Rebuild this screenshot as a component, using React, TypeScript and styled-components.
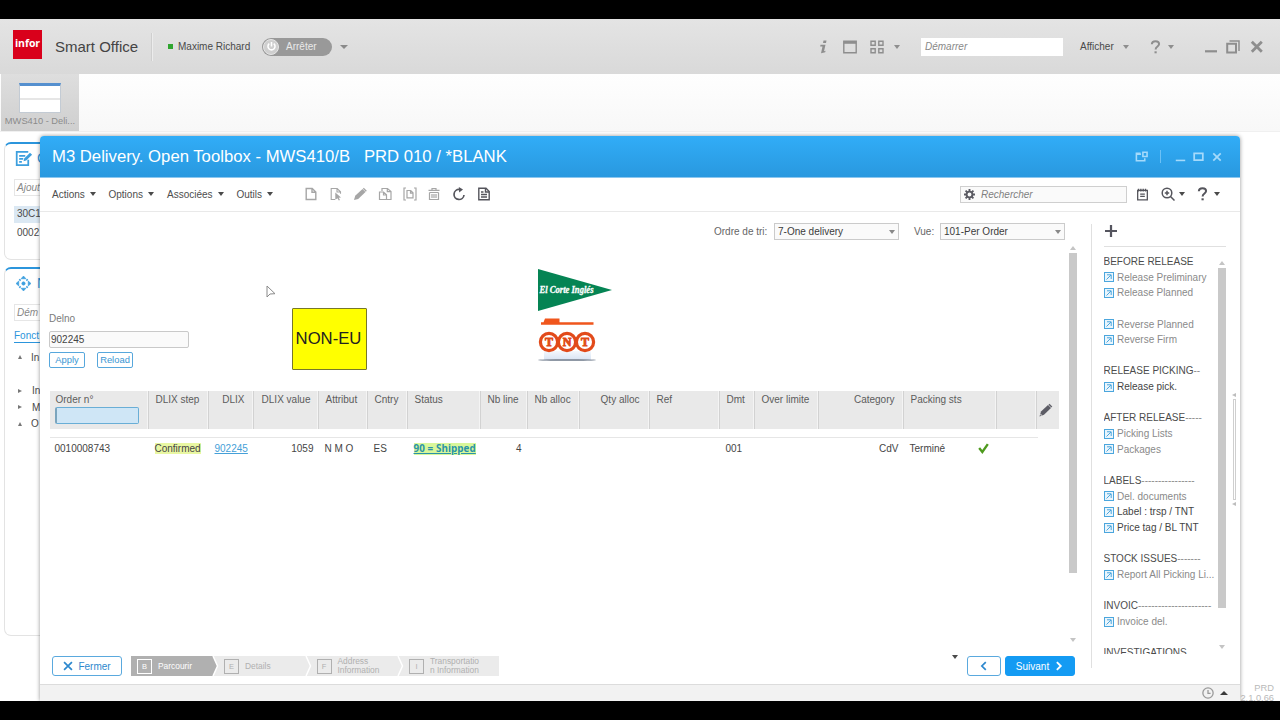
import React from "react";
import styled, { createGlobalStyle } from "styled-components";

const GlobalStyle = createGlobalStyle`
  *, *::before, *::after { box-sizing: border-box; }
  html, body { margin: 0; padding: 0; background: #000; overflow: hidden; }
  body { font-family: "Liberation Sans", Arial, sans-serif; font-size: 10px; color: #4a4a4a; }
  svg { display: block; flex: none; }
`;

/* ---------- frame ---------- */

const Screen = styled.div`
  width: 1280px;
  height: 720px;
  padding: 19px 0;
  background: #000;
`;

const Stage = styled.div`
  position: relative;
  display: flex;
  flex-direction: column;
  height: 682px;
  background: #fff;
  overflow: hidden;
`;

/* ---------- application bar ---------- */

const AppBar = styled.header`
  display: flex;
  align-items: center;
  flex: none;
  height: 55px;
  padding: 0 17px 0 13px;
  background: linear-gradient(#e4e4e4, #d9d9d9);
`;

const BrandTile = styled.div`
  width: 29px;
  height: 29px;
  margin-top: -4px;
  padding-top: 5px;
  background: #d9001b;
  color: #fff;
  font: 700 10.5px/17px "Open Sans", sans-serif;
  text-align: center;
  letter-spacing: -0.1px;
`;

const BrandName = styled.div`
  width: 83px;
  margin-left: 13px;
  font-size: 15px;
  color: #444;
  white-space: nowrap;
`;

const BarRule = styled.div`
  width: 2px;
  height: 28px;
  margin-left: 13px;
  background: #ececec;
  border-left: 1px solid #cfcfcf;
`;

const Presence = styled.div`
  display: flex;
  align-items: center;
  gap: 5px;
  width: 83px;
  margin-left: 15px;
  white-space: nowrap;
  &::before {
    content: "";
    width: 5px;
    height: 5px;
    background: #2fa52f;
  }
`;

const StopToggle = styled.div`
  display: flex;
  align-items: center;
  gap: 7px;
  width: 70px;
  height: 18px;
  margin-left: 11px;
  padding-left: 1px;
  border-radius: 9px;
  background: #999;
  color: #e9e9e9;
`;

const Knob = styled.span`
  display: grid;
  place-items: center;
  width: 16px;
  height: 16px;
  border-radius: 50%;
  background: #cfcfcf;
  border: 1px solid #e6e6e6;
`;

const Spacer = styled.div`
  flex: 1;
`;

const BarTools = styled.div`
  display: flex;
  align-items: center;
  width: 445px;
  height: 20px;
  color: #8e8e8e;
`;

const Slot = styled.span<{ $w: number; $end?: boolean }>`
  display: flex;
  align-items: center;
  justify-content: ${(p) => (p.$end ? "flex-end" : "flex-start")};
  flex: none;
  width: ${(p) => p.$w}px;
`;

const LaunchBox = styled.div`
  flex: none;
  width: 142px;
  height: 18px;
  margin-right: 17px;
  padding-left: 4px;
  background: #fff;
  color: #888;
  font-style: italic;
  line-height: 18px;
`;

const AfficherLabel = styled.span`
  color: #4a4a4a;
`;

const Caret = styled.i<{ $color?: string; $w?: number; $up?: boolean }>`
  flex: none;
  width: 0;
  height: 0;
  border-left: ${(p) => (p.$w ?? 7) / 2}px solid transparent;
  border-right: ${(p) => (p.$w ?? 7) / 2}px solid transparent;
  border-top: ${(p) => (p.$up ? "0" : "4px solid " + (p.$color ?? "#4a4a4a"))};
  border-bottom: ${(p) => (p.$up ? "4px solid " + (p.$color ?? "#4a4a4a") : "0")};
`;

/* ---------- task strip ---------- */

const TaskStrip = styled.div`
  flex: none;
  height: 58px;
  padding-left: 1px;
  background: linear-gradient(#fefefe, #f8f8f8);
  border-bottom: 1px solid #f0f0f0;
`;

const Task = styled.div`
  display: flex;
  flex-direction: column;
  align-items: center;
  width: 78px;
  height: 57px;
  padding-top: 9px;
  background: linear-gradient(#dedede, #cfcfcf);
  color: #8b8b8b;
  font-size: 9.3px;
  white-space: nowrap;
`;

const Thumb = styled.div`
  width: 42px;
  height: 30px;
  margin-bottom: 3px;
  border: 1px solid #c3cbd4;
  border-top: 3px solid #5590cf;
  background: linear-gradient(#fff 12px, #e6e6e6 12px, #e6e6e6 14px, #fff 14px);
`;

/* ---------- desktop widgets ---------- */

const Desktop = styled.div`
  display: flex;
  flex-direction: column;
  gap: 7px;
  padding: 10px 0 0 4px;
`;

const Widget = styled.section<{ $h: number }>`
  width: 200px;
  height: ${(p) => p.$h}px;
  padding: 5px 0 0 9px;
  border: 1px solid #e3e3e3;
  border-top: 2px solid #2b95dc;
  border-radius: 7px;
  background: #fff;
  overflow: hidden;
`;

const WidgetTitle = styled.div`
  display: flex;
  align-items: center;
  gap: 4px;
  height: 18px;
  color: #2b95dc;
  font-size: 14px;
`;

const WidgetInput = styled.div`
  height: 17px;
  margin-top: 12px;
  padding-left: 2px;
  border: 1px solid #e6e6e6;
  color: #888;
  font-style: italic;
  line-height: 15px;
`;

const WidgetGap = styled.div`
  height: 10px;
`;

const WidgetRow = styled.div<{ $on?: boolean }>`
  height: 17px;
  margin-bottom: 2px;
  padding-left: 3px;
  background: ${(p) => (p.$on ? "#dbe8f3" : "transparent")};
  line-height: 16px;
  white-space: nowrap;
`;

const WidgetTab = styled.div`
  width: 60px;
  height: 13px;
  margin: 9px 0 6px;
  border-bottom: 1px solid #2b95dc;
  color: #2b95dc;
  line-height: 11px;
`;

const TreeRow = styled.div<{ $mt?: number }>`
  display: flex;
  align-items: center;
  gap: 9px;
  height: 16.5px;
  margin-top: ${(p) => p.$mt ?? 0}px;
  padding-left: 4px;
`;

const TreeClosed = styled.i`
  width: 0;
  height: 0;
  margin: 0 1px 0 0;
  border-top: 2.5px solid transparent;
  border-bottom: 2.5px solid transparent;
  border-left: 4px solid #777;
`;

const BuildTag = styled.div`
  position: absolute;
  right: 6px;
  bottom: -2px;
  color: #b9b9b9;
  font-size: 9.3px;
  line-height: 9.5px;
  text-align: right;
`;

/* ---------- window ---------- */

const Win = styled.div`
  position: absolute;
  left: 40px;
  top: 117px;
  display: flex;
  flex-direction: column;
  width: 1200px;
  height: 565px;
  border-radius: 4px 4px 0 0;
  background: #fff;
  box-shadow: 0 0 4px rgba(0, 0, 0, 0.42);
`;

const TitleBar = styled.div`
  display: flex;
  align-items: center;
  flex: none;
  height: 42px;
  padding: 0 18px 0 12px;
  border-radius: 4px 4px 0 0;
  border-bottom: 1px solid #8cc7ef;
  background: linear-gradient(#31adf7, #2998df);
  color: #fff;
  font-size: 16.7px;
  white-space: pre;
`;

const WinButtons = styled.div`
  display: flex;
  align-items: center;
  color: #a5dafb;
`;

const TitleRule = styled.div`
  width: 1px;
  height: 13px;
  margin-right: 14px;
  background: #6cc1f6;
`;

const Toolbar = styled.div`
  display: flex;
  align-items: center;
  flex: none;
  height: 34px;
  padding: 0 20px 1px 12px;
  border-bottom: 1px solid #e9e9e9;
`;

const MenuItem = styled.div<{ $w: number }>`
  display: flex;
  align-items: center;
  gap: 5px;
  width: ${(p) => p.$w}px;
  color: #4d4d4d;
`;

const IconRow = styled.div`
  display: flex;
  gap: 10.7px;
  color: #a6a6a6;
`;

const SearchBox = styled.div`
  display: flex;
  align-items: center;
  gap: 6px;
  width: 167px;
  height: 17px;
  padding-left: 3px;
  border: 1px solid #cfcfcf;
  background: #fafafa;
  color: #808080;
  font-style: italic;
`;

const ToolGap = styled.div`
  width: 9px;
`;

const WinBody = styled.div`
  display: flex;
  flex: 1;
  min-height: 0;
`;

const Main = styled.div`
  display: flex;
  flex-direction: column;
  width: 1051px;
`;

const Filters = styled.div`
  display: flex;
  align-items: center;
  height: 17px;
  margin-top: 11px;
  padding-left: 674px;
`;

const FilterLabel = styled.span<{ $w: number }>`
  width: ${(p) => p.$w}px;
  color: #666;
`;

const Select = styled.div`
  display: flex;
  align-items: center;
  justify-content: space-between;
  width: 125px;
  height: 17px;
  margin-right: 15px;
  padding: 0 3px;
  border: 1px solid #cbcbcb;
  background: #fafafa;
  color: #3c3c3c;
`;

const ContentRow = styled.div`
  display: flex;
  height: 416px;
`;

const Content = styled.div`
  width: 1029px;
`;

const ScrollTrack = styled.div<{ $gap: number }>`
  display: flex;
  flex-direction: column;
  align-items: center;
  width: 8px;
  padding: ${(p) => p.$gap}px 0 0;
`;

const ScrollThumb = styled.div<{ $h: number }>`
  width: 8px;
  height: ${(p) => p.$h}px;
  margin: 3px 0 auto;
  background: #c9c9c9;
`;

const TrackEnd = styled.div<{ $b: number }>`
  display: flex;
  padding-bottom: ${(p) => p.$b}px;
`;

const TopArea = styled.div`
  display: flex;
  height: 151px;
  padding-left: 9px;
`;

const Delno = styled.div`
  width: 243px;
  padding-top: 73px;
  color: #7b7b7b;
  line-height: 12px;
`;

const DelnoInput = styled.div`
  width: 140px;
  height: 17px;
  margin: 6px 0 4px;
  padding-left: 1px;
  border: 1px solid #c9c9c9;
  border-radius: 2px;
  background: #fafafa;
  color: #444;
  line-height: 15px;
`;

const ButtonPair = styled.div`
  display: flex;
  gap: 12px;
`;

const SmallButton = styled.div`
  width: 36px;
  height: 16px;
  border: 1px solid #57a7dc;
  border-radius: 2px;
  color: #3a96d3;
  font-size: 9.4px;
  line-height: 14px;
  text-align: center;
`;

const Zone = styled.div`
  display: grid;
  place-items: center;
  width: 75px;
  height: 62px;
  margin: 68px 171px 0 0;
  padding-right: 2px;
  border: 1px solid #77772a;
  border-radius: 1px;
  background: #ffff00;
  color: #222;
  font-size: 16.7px;
`;

const Logos = styled.div`
  display: flex;
  flex-direction: column;
  gap: 7px;
  padding-top: 29px;
`;

const Table = styled.div`
  width: 1009px;
  margin-left: 9.5px;
`;

const columns =
  "99px 60px 45px 65px 49px 40px 73px 47px 52px 70px 70px 35px 64px 85px 93px 40px 22px";

const HeadRow = styled.div`
  display: grid;
  grid-template-columns: ${columns};
  height: 38px;
  background: #e9e9e9;
`;

const HeadCell = styled.div<{ $end?: number; $pad?: number }>`
  padding: 2.5px ${(p) => p.$end ?? 0}px 0 ${(p) => p.$pad ?? 7}px;
  text-align: ${(p) => (p.$end ? "right" : "left")};
  border-right: 1px solid #d2d2d2;
  box-shadow: inset -1px 0 #f4f4f4;
  color: #5c5c5c;
  line-height: 12px;
  white-space: nowrap;
`;

const HeadFilter = styled.div`
  width: 84px;
  height: 17px;
  margin: 1.5px 0 0 -1px;
  border: 1px solid #69aed6;
  border-left: 2px solid #7ba5bd;
  border-radius: 2px;
  background: #cfe6f6;
`;

const PencilCell = styled.div`
  display: grid;
  place-items: center;
  padding-right: 3px;
`;

const DataRow = styled.div`
  display: grid;
  grid-template-columns: ${columns};
  align-items: center;
  width: 988px;
  height: 22px;
  margin-top: 8px;
  border-top: 1px solid #e6e6e6;
`;

const Cell = styled.div<{ $end?: number; $pad?: number }>`
  padding: 0 ${(p) => p.$end ?? 0}px 0 ${(p) => p.$pad ?? 6}px;
  text-align: ${(p) => (p.$end ? "right" : "left")};
  color: #454545;
  white-space: nowrap;
`;

const PackingCell = styled.div`
  display: flex;
  align-items: center;
  justify-content: space-between;
  padding: 0 8px 0 6px;
  color: #454545;
`;

const Mark = styled.span`
  background: #e9f7a2;
`;

const DelLink = styled.span`
  color: #45a0d8;
  text-decoration: underline;
`;

const StatusLink = styled.span`
  display: inline-block;
  height: 12px;
  background: #d9f79a;
  color: #2a93a8;
  font: 700 9.8px/12px "Open Sans", sans-serif;
  letter-spacing: 0.1px;
  text-decoration: underline;
`;

const Footer = styled.div`
  display: flex;
  align-items: center;
  height: 20px;
  padding-left: 12px;
`;

const ActionButton = styled.div<{ $w: number; $solid?: boolean }>`
  display: flex;
  align-items: center;
  justify-content: center;
  gap: 5px;
  width: ${(p) => p.$w}px;
  height: 20px;
  border: 1px solid ${(p) => (p.$solid ? "#149bf3" : "#5aa9de")};
  border-radius: 3px;
  background: ${(p) => (p.$solid ? "#149bf3" : "#fff")};
  color: ${(p) => (p.$solid ? "#fff" : "#2d88ce")};
`;

const Steps = styled.div`
  display: flex;
  width: 368px;
  height: 20px;
  margin: 0 453px 0 9px;
  background: #ebebeb;
`;

const Step = styled.div<{ $on?: boolean }>`
  display: flex;
  align-items: center;
  gap: 6px;
  width: ${(p) => (p.$on ? 81 : 81.5)}px;
  height: 20px;
  padding-left: ${(p) => (p.$on ? 6 : 1)}px;
  color: ${(p) => (p.$on ? "#fff" : "#b0b0b0")};
  background: ${(p) => (p.$on ? "#b0b0b0" : "#ebebeb")};
  font-size: 8.4px;
  line-height: 9px;
  white-space: pre;
`;

const StepBox = styled.span`
  display: grid;
  place-items: center;
  width: 15px;
  height: 15px;
  border: 1px solid currentColor;
  font-size: 7.5px;
`;

const RaisedCaret = styled.div`
  display: flex;
  width: 15px;
  height: 22px;
`;

const ButtonGap = styled.div`
  width: 4px;
`;

const Side = styled.aside`
  display: flex;
  width: 137px;
  height: 444px;
  margin-top: 12px;
  padding: 0 2px 0 11.5px;
  flex-direction: column;
  border-left: 1px solid #e0e0e0;
`;

const AddBar = styled.div`
  height: 23px;
  padding: 1px 0 0 1px;
  border-bottom: 1px solid #e0e0e0;
  color: #55555f;
`;

const SideScroll = styled.div`
  display: flex;
  justify-content: space-between;
  height: 408px;
`;

const SideList = styled.div`
  width: 112px;
  height: 407px;
  padding-top: 6.6px;
  overflow: hidden;
`;

const SideHead = styled.div`
  height: 15.66px;
  color: #4c4c4c;
  line-height: 15.66px;
  white-space: nowrap;
`;

const Dashes = styled.span`
  color: #8c8c8c;
`;

const SideLink = styled.div<{ $on?: boolean }>`
  display: flex;
  align-items: center;
  gap: 3.5px;
  height: 15.66px;
  color: ${(p) => (p.$on ? "#444" : "#8a8a8a")};
  white-space: nowrap;
`;

const SplitterColumn = styled.div`
  display: flex;
  flex-direction: column;
  align-items: center;
  gap: 2px;
  width: 12px;
  padding-top: 181px;
`;

const SplitterBar = styled.div`
  width: 3px;
  height: 101px;
  border: 1px solid #cfcfcf;
`;

const SplitArrow = styled.i`
  width: 0;
  height: 0;
  border-top: 2.5px solid transparent;
  border-bottom: 2.5px solid transparent;
  border-right: 4px solid #bdbdbd;
`;

const StatusBar = styled.div`
  display: flex;
  align-items: center;
  justify-content: flex-end;
  gap: 6px;
  flex: none;
  height: 17px;
  padding-right: 12px;
  border-top: 1px solid #dcdcdc;
  background: #f2f2f2;
`;

const Pointer = styled.svg`
  position: absolute;
  left: 266px;
  top: 266px;
`;

/* ---------- icons ---------- */

type IconProps = { size?: number; color?: string; sw?: number; children: React.ReactNode };

const Icon = ({ size = 14, color = "currentColor", sw = 1.4, children }: IconProps) => (
  <svg width={size} height={size} viewBox="0 0 14 14" fill="none" stroke={color} strokeWidth={sw}>
    {children}
  </svg>
);

const HelpIcon = ({ color }: { color: string }) => (
  <Icon color={color} sw={2}>
    <path d="M2.800 4.200C2.900 2.300 4.400 1.200 6.500 1.200c2.200 0 3.600 1.100 3.600 2.900C10.100 6.500 6.600 6.500 6.600 9.400" />
    <path d="M5.500 12.300h2.200" />
  </Icon>
);

const Shortcut = () => (
  <svg width="10" height="10" viewBox="0 0 10 10" fill="#eaf5fc" stroke="#4ba6dd">
    <rect x=".5" y=".5" width="9" height="9" />
    <path d="M2.500 7.500L7 3M3 2.800h4.200v4.200" fill="none" />
  </svg>
);

const ToolbarIcons = () => (
  <IconRow>
    <Icon>
      <path d="M2.200 1.500h6l3.600 3.600v7.400H2.200zM8 1.500v3.800h3.800" />
    </Icon>
    <Icon sw={1.1}>
      <path d="M6 12.500H2.200v-11h6l3.300 3.300v2M8 1.500v3.500h3.500" />
      <path d="M6.300 5.500l5.700 5-2.300.3 1.300 2.300-1.200.5-1.300-2.400-2.200 1.500z" fill="currentColor" stroke="none" />
    </Icon>
    <Icon>
      <path d="M1 13l1.200-4.200L9.500 2l3 3-7.300 6.900z" fill="currentColor" stroke="none" />
      <path d="M10.300 1.200l3 3" />
    </Icon>
    <Icon sw={1.2}>
      <path d="M4 4V1.500h5.500l3.500 3v8H8.500M1.500 5h4l3 2.800v4.700h-7zM5.500 5v3h3M9.300 1.700v3h3.500" />
    </Icon>
    <Icon sw={1.2}>
      <path d="M3 1H1v12h2M11 1h2v12h-2M4 3.500h3.700l2.300 2.300v5H4zM7.500 3.500v2.700H10" />
    </Icon>
    <Icon sw={1.2}>
      <path d="M1.500 3.300h11M5 3V1.500h4V3M2.500 5.500v7h9v-7M2.500 5.500h9M5 7v4M7 7v4M9 7v4" />
    </Icon>
    <Icon color="#55555c" sw={1.7}>
      <path d="M7.500 2.500A5 5 0 1 0 12 8" />
      <path d="M6.800 0l4.200 2.600L7.200 5.600z" fill="#55555c" stroke="none" />
    </Icon>
    <Icon color="#55555c" sw={1.4}>
      <path d="M1.800 1.300h7.200l3.200 3.200v8.200H1.800zM4 5h2.500M4 7.500h6M4 10h6" />
      <path d="M8.500 1.500v3.500h3.700" />
    </Icon>
  </IconRow>
);

const FlagLogo = () => (
  <svg width="74" height="42" viewBox="0 0 74 42">
    <path d="M0 0L74 21 0 42z" fill="#058454" />
    <text
      x="1.500"
      y="24"
      textLength="54"
      lengthAdjust="spacingAndGlyphs"
      fill="#fff"
      stroke="#fff"
      strokeWidth=".3"
      fontFamily="Liberation Serif, serif"
      fontStyle="italic"
      fontWeight="700"
      fontSize="9.500"
    >
      El Corte Inglés
    </text>
  </svg>
);

const TntLogo = () => (
  <svg width="60" height="44" viewBox="0 0 60 44">
    <defs>
      <linearGradient id="tntShade" x1="0" y1="0" x2="0" y2="1">
        <stop offset="0" stopColor="#f4f8fd" />
        <stop offset="1" stopColor="#d8e3f3" />
      </linearGradient>
    </defs>
    <rect x="6" y="33" width="47" height="9" fill="url(#tntShade)" />
    <ellipse cx="29" cy="42" rx="29" ry="1.100" fill="#8f98a5" />
    <path d="M3 4.200h2.500L7 .5h14.500v3.700h34v2.600H3z" fill="#f0561d" />
    {[11, 29, 47].map((x) => (
      <circle key={x} cx={x} cy="24" r="8.600" fill="#fff" stroke="#e24a1a" strokeWidth="3.200" />
    ))}
    {[11, 29, 47].map((x, i) => (
      <text
        key={x}
        x={x}
        y="28.200"
        textAnchor="middle"
        fill="#e04a17"
        stroke="#e04a17"
        strokeWidth=".9"
        fontFamily="Liberation Serif, serif"
        fontWeight="700"
        fontSize="12"
      >
        {"TNT"[i]}
      </text>
    ))}
  </svg>
);

const StepArrow = ({ from, to }: { from: string; to: string }) => (
  <svg width="11" height="20" viewBox="0 0 11 20">
    <rect width="11" height="20" fill={to} />
    <path d="M0 0h1l4.500 10L1 20H0z" fill={from} />
    <path d="M1 0l4.500 10L1 20" fill="none" stroke="#fff" strokeWidth="1.500" />
  </svg>
);

/* ---------- data ---------- */

type SideEntry = { head?: string; dashes?: number; link?: string; on?: boolean };

const sideEntries: SideEntry[] = [
  { head: "BEFORE RELEASE" },
  { link: "Release Preliminary" },
  { link: "Release Planned" },
  {},
  { link: "Reverse Planned" },
  { link: "Reverse Firm" },
  {},
  { head: "RELEASE PICKING", dashes: 2 },
  { link: "Release pick.", on: true },
  {},
  { head: "AFTER RELEASE", dashes: 5 },
  { link: "Picking Lists" },
  { link: "Packages" },
  {},
  { head: "LABELS", dashes: 16 },
  { link: "Del. documents" },
  { link: "Label : trsp / TNT", on: true },
  { link: "Price tag / BL TNT", on: true },
  {},
  { head: "STOCK ISSUES", dashes: 7 },
  { link: "Report All Picking Li..." },
  {},
  { head: "INVOIC", dashes: 22 },
  { link: "Invoice del." },
  {},
  { head: "INVESTIGATIONS" },
];

const menus: [string, number][] = [
  ["Actions", 56.5],
  ["Options", 58.5],
  ["Associées", 69.5],
  ["Outils", 67.5],
];

const renderSideEntry = (e: SideEntry, i: number) =>
  e.link ? (
    <SideLink key={i} $on={e.on}>
      <Shortcut />
      {e.link}
    </SideLink>
  ) : (
    <SideHead key={i}>
      {e.head}
      {e.dashes ? <Dashes>{"-".repeat(e.dashes)}</Dashes> : null}
    </SideHead>
  );

export default function App() {
  return (
    <Screen>
      <GlobalStyle />
      <Stage>
        <AppBar>
          <BrandTile>infor</BrandTile>
          <BrandName>Smart Office</BrandName>
          <BarRule />
          <Presence>Maxime Richard</Presence>
          <StopToggle>
            <Knob>
              <Icon size={9} color="#fff" sw={2.4}>
                <path d="M7 0v7M3.500 2.500a5.500 5.500 0 1 0 7 0" />
              </Icon>
            </Knob>
            Arrêter
          </StopToggle>
          <Slot $w={16} $end>
            <Caret $color="#8a8a8a" $w={8} />
          </Slot>
          <Spacer />
          <BarTools>
            <Slot $w={25}>
              <svg width="10" height="14" viewBox="0 0 10 14" fill="#8e8e8e">
                <path d="M5.500.5h3L8 3H5zM2.500 4.800h5L6 11.300l1.600-.5-.4 1.500-4.200 1 1.500-6.800-2.300-.1z" />
              </svg>
            </Slot>
            <Slot $w={27}>
              <Icon>
                <path d="M.8 1.200h12.400v11.600H.8z" />
                <path d="M.8 2.500h12.400" strokeWidth="2.600" />
              </Icon>
            </Slot>
            <Slot $w={24}>
              <Icon>
                <path d="M1 1.200h4.200v4H1zM8.800 1.200H13v4H8.800zM1 8.800h4.200v4H1zM8.800 8.800H13v4H8.800z" />
              </Icon>
            </Slot>
            <Slot $w={27}>
              <Caret $color="#8e8e8e" />
            </Slot>
            <LaunchBox>Démarrer</LaunchBox>
            <Slot $w={43}>
              <AfficherLabel>Afficher</AfficherLabel>
            </Slot>
            <Slot $w={26}>
              <Caret $color="#8e8e8e" />
            </Slot>
            <Slot $w={19}>
              <HelpIcon color="#8e8e8e" />
            </Slot>
            <Slot $w={36}>
              <Caret $color="#8e8e8e" />
            </Slot>
            <Slot $w={22}>
              <Icon sw={2.2}>
                <path d="M1 11.300h12" />
              </Icon>
            </Slot>
            <Slot $w={24}>
              <Icon sw={2}>
                <path d="M1.200 3.800h8.800v8.800H1.200z" />
                <path d="M3.500 1H13v10" strokeWidth="1.500" />
              </Icon>
            </Slot>
            <Icon sw={2.8}>
              <path d="M1.800 1.800l10 10M11.800 1.800l-10 10" />
            </Icon>
          </BarTools>
        </AppBar>

        <TaskStrip>
          <Task>
            <Thumb />
            MWS410 - Deli...
          </Task>
        </TaskStrip>

        <Desktop>
          <Widget $h={118}>
            <WidgetTitle>
              <Icon size={19} sw={1.3} color="#3d9fde">
                <path d="M10.500 8v3.800H2V2.200h8.500M3.800 5h4.500M3.800 7.200h3M3.800 9.400h2" />
                <path d="M7 9l.5-2L11.800 2.800l1.500 1.500L9 8.500z" fill="#3d9fde" stroke="none" />
              </Icon>
              C
            </WidgetTitle>
            <WidgetInput>Ajout</WidgetInput>
            <WidgetGap />
            <WidgetRow $on>30C1</WidgetRow>
            <WidgetRow>0002</WidgetRow>
          </Widget>
          <Widget $h={369}>
            <WidgetTitle>
              <Icon size={19} color="#3d9fde">
                <path d="M7 1.500l1.800 2H5.200zM7 12.500l1.800-2H5.200zM1.500 7l2-1.800v3.600zM12.500 7l-2-1.800v3.600z" fill="#3d9fde" strokeWidth=".5" />
                <circle cx="7" cy="7" r="1.200" fill="#3d9fde" strokeWidth=".5" />
                <path d="M4 4.800L4.800 4M10 4.800L9.200 4M4 9.200l.8.800M10 9.200l-.8.800" />
              </Icon>
              N
            </WidgetTitle>
            <WidgetInput>Dém</WidgetInput>
            <WidgetTab>Fonct</WidgetTab>
            <TreeRow>
              <Caret $up $w={5} $color="#777" />
              In
            </TreeRow>
            <TreeRow $mt={17}>
              <TreeClosed />
              In
            </TreeRow>
            <TreeRow>
              <TreeClosed />M
            </TreeRow>
            <TreeRow>
              <Caret $up $w={5} $color="#777" />O
            </TreeRow>
          </Widget>
        </Desktop>

        <BuildTag>
          PRD
          <br />
          12.1.0.66
        </BuildTag>

        <Win>
          <TitleBar>
            {"M3 Delivery. Open Toolbox - MWS410/B   PRD 010 / *BLANK"}
            <Spacer />
            <WinButtons>
              <Slot $w={25}>
                <Icon size={13} sw={1.7}>
                  <path d="M6 3.500H1.500v8h9V9M1.500 4.500h5M8.500 2.500h4.500v4.500H8.500z" />
                </Icon>
              </Slot>
              <TitleRule />
              <Slot $w={18}>
                <Icon size={11} sw={2}>
                  <path d="M1 12h12" />
                </Icon>
              </Slot>
              <Slot $w={19}>
                <Icon size={11} sw={2.2}>
                  <path d="M1.500 3h11v8.500h-11z" />
                </Icon>
              </Slot>
              <Icon size={10} sw={2.4}>
                <path d="M1.800 1.800l10.400 10.400M12.200 1.800L1.800 12.200" />
              </Icon>
            </WinButtons>
          </TitleBar>

          <Toolbar>
            {menus.map(([label, w]) => (
              <MenuItem key={label} $w={w}>
                {label}
                <Caret $w={6.5} />
              </MenuItem>
            ))}
            <ToolbarIcons />
            <Spacer />
            <SearchBox>
              <Icon size={11} color="#5a5a62" sw={2.4}>
                <circle cx="7" cy="7" r="3.700" />
                <path d="M7 0v3M7 11v3M0 7h3M11 7h3M2 2l2.200 2.200M9.800 9.800L12 12M12 2L9.800 4.200M4.200 9.800L2 12" />
              </Icon>
              Rechercher
            </SearchBox>
            <ToolGap />
            <Slot $w={25}>
              <Icon size={13} color="#55555c">
                <path d="M1.800 2.500h10.400v10.300H1.800zM4.500 6.500h5M4.500 9h5" />
                <path d="M2 2.300h10" strokeWidth="2.800" strokeDasharray="1.500 1" />
              </Icon>
            </Slot>
            <Slot $w={18}>
              <Icon color="#55555c" sw={1.5}>
                <circle cx="6" cy="6" r="4.800" />
                <path d="M9.500 9.500l4 4M3.800 6h4.400M6 3.800v4.400" />
              </Icon>
            </Slot>
            <Slot $w={17}>
              <Caret $w={6} />
            </Slot>
            <Slot $w={18}>
              <HelpIcon color="#55555c" />
            </Slot>
            <Caret $w={6} />
          </Toolbar>

          <WinBody>
            <Main>
              <Filters>
                <FilterLabel $w={60}>Ordre de tri:</FilterLabel>
                <Select>
                  7-One delivery
                  <Caret $color="#888" />
                </Select>
                <FilterLabel $w={26}>Vue:</FilterLabel>
                <Select>
                  101-Per Order
                  <Caret $color="#888" />
                </Select>
              </Filters>

              <ContentRow>
                <Content>
                  <TopArea>
                    <Delno>
                      Delno
                      <DelnoInput>902245</DelnoInput>
                      <ButtonPair>
                        <SmallButton>Apply</SmallButton>
                        <SmallButton>Reload</SmallButton>
                      </ButtonPair>
                    </Delno>
                    <Zone>NON-EU</Zone>
                    <Logos>
                      <FlagLogo />
                      <TntLogo />
                    </Logos>
                  </TopArea>

                  <Table>
                    <HeadRow>
                      <HeadCell $pad={6}>
                        Order n°
                        <HeadFilter />
                      </HeadCell>
                      <HeadCell>DLIX step</HeadCell>
                      <HeadCell $end={8}>DLIX</HeadCell>
                      <HeadCell $end={7}>DLIX value</HeadCell>
                      <HeadCell>Attribut</HeadCell>
                      <HeadCell>Cntry</HeadCell>
                      <HeadCell>Status</HeadCell>
                      <HeadCell $end={8}>Nb line</HeadCell>
                      <HeadCell>Nb alloc</HeadCell>
                      <HeadCell $end={9}>Qty alloc</HeadCell>
                      <HeadCell>Ref</HeadCell>
                      <HeadCell>Dmt</HeadCell>
                      <HeadCell>Over limite</HeadCell>
                      <HeadCell $end={8}>Category</HeadCell>
                      <HeadCell>Packing sts</HeadCell>
                      <HeadCell />
                      <PencilCell>
                        <Icon color="#5d5d66">
                          <path d="M.5 13.500l1.500-5L9 2l3 3-7 6.800z" fill="#5d5d66" stroke="none" />
                          <path d="M10 1.300l2.800 2.800" />
                          <path d="M1.300 12.300l2 .3-1.600-1.800z" fill="#fff" stroke="none" />
                        </Icon>
                      </PencilCell>
                    </HeadRow>
                    <DataRow>
                      <Cell $pad={5}>0010008743</Cell>
                      <Cell>
                        <Mark>Confirmed</Mark>
                      </Cell>
                      <Cell $end={6}>
                        <DelLink>902245</DelLink>
                      </Cell>
                      <Cell $end={5}>1059</Cell>
                      <Cell>N M O</Cell>
                      <Cell>ES</Cell>
                      <Cell>
                        <StatusLink>90 = Shipped</StatusLink>
                      </Cell>
                      <Cell $end={6}>4</Cell>
                      <Cell />
                      <Cell />
                      <Cell />
                      <Cell>001</Cell>
                      <Cell />
                      <Cell $end={5}>CdV</Cell>
                      <PackingCell>
                        Terminé
                        <Icon size={11} color="#4e9a1e" sw={3}>
                          <path d="M1.500 6.500l4 5L12.500 1.500" />
                        </Icon>
                      </PackingCell>
                    </DataRow>
                  </Table>
                </Content>
                <ScrollTrack $gap={6}>
                  <Caret $up $w={6} $color="#c4c4c4" />
                  <ScrollThumb $h={320} />
                  <TrackEnd $b={14}>
                    <Caret $w={6} $color="#c4c4c4" />
                  </TrackEnd>
                </ScrollTrack>
              </ContentRow>

              <Footer>
                <ActionButton $w={70}>
                  <Icon size={10} sw={2.4}>
                    <path d="M1.500 1.500l11 11M12.500 1.500l-11 11" />
                  </Icon>
                  Fermer
                </ActionButton>
                <Steps>
                  <Step $on>
                    <StepBox>B</StepBox>
                    Parcourir
                  </Step>
                  <StepArrow from="#b0b0b0" to="#ebebeb" />
                  <Step>
                    <StepBox>E</StepBox>
                    Details
                  </Step>
                  <StepArrow from="#ebebeb" to="#ebebeb" />
                  <Step>
                    <StepBox>F</StepBox>
                    {"Address\nInformation"}
                  </Step>
                  <StepArrow from="#ebebeb" to="#ebebeb" />
                  <Step>
                    <StepBox>I</StepBox>
                    {"Transportatio\nn Information"}
                  </Step>
                </Steps>
                <RaisedCaret>
                  <Caret />
                </RaisedCaret>
                <ActionButton $w={34}>
                  <Icon size={10} sw={2.4}>
                    <path d="M9.500 1.500L4 7l5.500 5.500" />
                  </Icon>
                </ActionButton>
                <ButtonGap />
                <ActionButton $w={70} $solid>
                  Suivant
                  <Icon size={10} sw={2.6}>
                    <path d="M4 1.500L9.500 7 4 12.500" />
                  </Icon>
                </ActionButton>
              </Footer>
            </Main>

            <Side>
              <AddBar>
                <Icon size={12} sw={2.6}>
                  <path d="M7 0v14M0 7h14" />
                </Icon>
              </AddBar>
              <SideScroll>
                <SideList>{sideEntries.map(renderSideEntry)}</SideList>
                <ScrollTrack $gap={14}>
                  <Caret $up $w={6} $color="#c4c4c4" />
                  <ScrollThumb $h={340} />
                  <TrackEnd $b={6}>
                    <Caret $w={6} $color="#c4c4c4" />
                  </TrackEnd>
                </ScrollTrack>
              </SideScroll>
            </Side>

            <SplitterColumn>
              <SplitArrow />
              <SplitterBar />
              <SplitArrow />
            </SplitterColumn>
          </WinBody>

          <StatusBar>
            <Icon size={12} color="#999" sw={1.5}>
              <circle cx="7" cy="7" r="6" />
              <path d="M7 3.500V7.500h3" />
            </Icon>
            <Caret $up $w={8} $color="#3a3a3a" />
          </StatusBar>
        </Win>

        <Pointer width="10" height="14" viewBox="0 0 10 14">
          <path d="M1 1v11l3-3 5-.3z" fill="#fff" stroke="#8a8a8a" />
        </Pointer>
      </Stage>
    </Screen>
  );
}
